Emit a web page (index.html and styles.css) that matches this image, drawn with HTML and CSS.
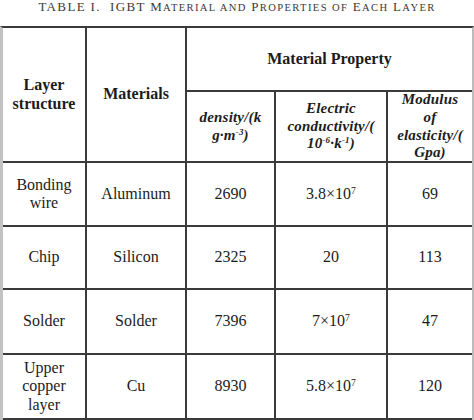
FILE: index.html
```html
<!DOCTYPE html>
<html>
<head>
<meta charset="utf-8">
<link rel="stylesheet" href="styles.css">
</head>
<body>
<div class="page">
  <div class="title">TABLE I.&nbsp; IGBT M<span class="sc">aterial and</span> P<span class="sc">roperties of</span> E<span class="sc">ach</span> L<span class="sc">ayer</span></div>
  <div class="grid">
    <div class="cell hd span-rows"><span>Layer<br>structure</span></div>
    <div class="cell hd span-rows"><span>Materials</span></div>
    <div class="cell hd span-cols"><span>Material Property</span></div>
    <div class="cell sub"><span>density/(k<br>g·m<sup>-3</sup>)</span></div>
    <div class="cell sub"><span>Electric<br>conductivity/(<br>10<sup>-6</sup>·k<sup>-1</sup>)</span></div>
    <div class="cell sub last"><span>Modulus<br>of<br>elasticity/(<br>Gpa)</span></div>

    <div class="cell"><span>Bonding<br>wire</span></div>
    <div class="cell"><span>Aluminum</span></div>
    <div class="cell"><span>2690</span></div>
    <div class="cell"><span>3.8×10<sup>7</sup></span></div>
    <div class="cell last"><span>69</span></div>

    <div class="cell"><span>Chip</span></div>
    <div class="cell"><span>Silicon</span></div>
    <div class="cell"><span>2325</span></div>
    <div class="cell"><span>20</span></div>
    <div class="cell last"><span>113</span></div>

    <div class="cell"><span>Solder</span></div>
    <div class="cell"><span>Solder</span></div>
    <div class="cell"><span>7396</span></div>
    <div class="cell"><span>7×10<sup>7</sup></span></div>
    <div class="cell last"><span>47</span></div>

    <div class="cell"><span>Upper<br>copper<br>layer</span></div>
    <div class="cell"><span>Cu</span></div>
    <div class="cell"><span>8930</span></div>
    <div class="cell"><span>5.8×10<sup>7</sup></span></div>
    <div class="cell last"><span>120</span></div>
  </div>
</div>
</body>
</html>
```
FILE: styles.css
```css
html, body {
  margin: 0;
  padding: 0;
  background: #ffffff;
}
.page {
  width: 474px;
  height: 420px;
  overflow: hidden;
  font-family: "Liberation Serif", "Times New Roman", serif;
  color: #1c1c1c;
}
.title {
  height: 26px;
  box-sizing: border-box;
  padding-top: 0;
  font-size: 13px;
  line-height: 13px;
  text-align: center;
  color: #3a3a3a;
  letter-spacing: 1.35px;
  white-space: nowrap;
}
.sc {
  font-size: 10.6px;
  text-transform: uppercase;
}
.grid {
  display: grid;
  grid-template-columns: 84px 100px 89px 112px 84px;
  grid-template-rows: 64px 71px 64px 63px 65px 65px;
  border-top: 2px solid #3a3a3a;
  border-left: 3px solid #c2c2c2;
  border-right: 2px solid #bcbcbc;
  width: 469px;
}
.cell {
  box-sizing: border-box;
  border-right: 2px solid #3a3a3a;
  border-bottom: 2px solid #3a3a3a;
  display: flex;
  align-items: center;
  justify-content: center;
  text-align: center;
  font-size: 16px;
  line-height: 18.3px;
  padding: 0 2px;
}
.cell.last {
  border-right: none;
}
.hd {
  font-weight: bold;
}
.span-rows {
  grid-row: span 2;
}
.span-cols {
  grid-column: span 3;
  border-right: none;
}
.sub {
  font-weight: bold;
  font-style: italic;
  font-size: 15px;
  line-height: 17.8px;
  letter-spacing: 0.2px;
}
sup {
  font-size: 0.6em;
  line-height: 0;
  vertical-align: 0.55em;
}
```
